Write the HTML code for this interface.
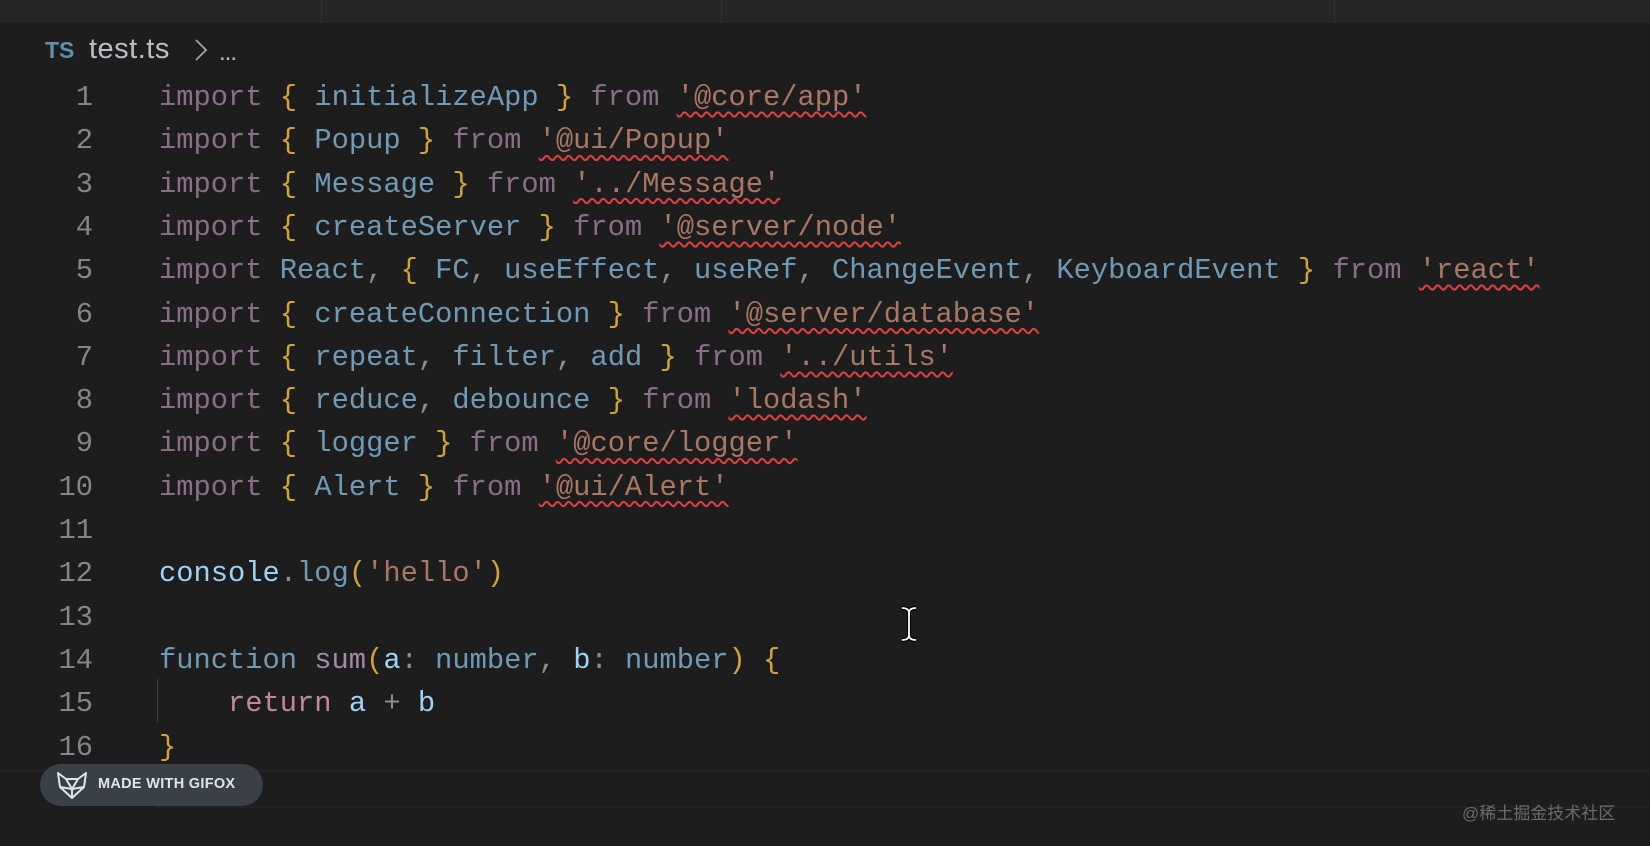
<!DOCTYPE html>
<html><head><meta charset="utf-8"><style>
html,body{margin:0;padding:0;width:1650px;height:846px;overflow:hidden;background:#1d1d1e;}
.top{position:absolute;left:0;top:0;width:1650px;height:23px;background:#262627;}
.sep{position:absolute;top:0;width:1px;height:23px;background:#323233;}
.bc{position:absolute;top:33px;font:29px "Liberation Sans",sans-serif;color:#b9bfc4;white-space:nowrap}
.ts{position:absolute;left:45px;top:37px;color:#5f8fad;font:bold 23px "Liberation Sans",sans-serif;}
.code{position:absolute;left:0;top:76px;font:28.75px/43.3px "Liberation Mono",monospace;white-space:pre;}
.ln{position:absolute;left:0;width:93px;text-align:right;color:#858585;}
.tx{position:absolute;left:159px;}
.k{color:#8a6d86}.i{color:#6f9ab5}.b{color:#d1a33a}.s{color:#a87862}.p{color:#8d8d8d}
.sq{text-decoration:underline wavy #e0403f;text-decoration-thickness:1.5px;text-underline-offset:6px}
.v{color:#9cd4f5}.r{color:#c0879e}.f{color:#a38aa8}.c{color:#9cd4f5}
.guide{position:absolute;left:157px;top:679px;width:1px;height:43px;background:#404040}
.hl{position:absolute;height:2px;background:#232324}
.badge{position:absolute;left:40px;top:764px;width:223px;height:42px;border-radius:21px;background:#3b4046;}
.badge span{position:absolute;left:58px;top:12px;font:bold 14.5px "Liberation Sans",sans-serif;color:#dde6ee;letter-spacing:.3px}
.wm{position:absolute;left:1462px;top:799px;font:17px "Liberation Sans","Noto Sans CJK SC",sans-serif;color:#6b6b6b}
</style></head><body>
<div class="top"></div>
<div class="sep" style="left:321px"></div><div class="sep" style="left:721px"></div><div class="sep" style="left:1334px"></div>
<div class="ts">TS</div>
<div class="bc" style="left:89px;letter-spacing:0.5px">test.ts</div>
<svg style="position:absolute;left:194px;top:38px" width="14" height="24" viewBox="0 0 14 24"><path d="M2 2 L12 12 L2 22" fill="none" stroke="#a0a6ab" stroke-width="1.8"/></svg>
<div class="bc" style="left:219px;font-size:24px;top:39px;letter-spacing:-1px">...</div>
<div class="code">
<div class="ln" style="top:0">1</div><div class="tx" style="top:0"><span class="k">import</span> <span class="b">{</span> <span class="i">initializeApp</span> <span class="b">}</span> <span class="k">from</span> <span class="s sq">'@core/app'</span></div>
<div class="ln" style="top:43.3px">2</div><div class="tx" style="top:43.3px"><span class="k">import</span> <span class="b">{</span> <span class="i">Popup</span> <span class="b">}</span> <span class="k">from</span> <span class="s sq">'@ui/Popup'</span></div>
<div class="ln" style="top:86.6px">3</div><div class="tx" style="top:86.6px"><span class="k">import</span> <span class="b">{</span> <span class="i">Message</span> <span class="b">}</span> <span class="k">from</span> <span class="s sq">'../Message'</span></div>
<div class="ln" style="top:129.9px">4</div><div class="tx" style="top:129.9px"><span class="k">import</span> <span class="b">{</span> <span class="i">createServer</span> <span class="b">}</span> <span class="k">from</span> <span class="s sq">'@server/node'</span></div>
<div class="ln" style="top:173.2px">5</div><div class="tx" style="top:173.2px"><span class="k">import</span> <span class="i">React</span><span class="p">,</span> <span class="b">{</span> <span class="i">FC</span><span class="p">,</span> <span class="i">useEffect</span><span class="p">,</span> <span class="i">useRef</span><span class="p">,</span> <span class="i">ChangeEvent</span><span class="p">,</span> <span class="i">KeyboardEvent</span> <span class="b">}</span> <span class="k">from</span> <span class="s sq">'react'</span></div>
<div class="ln" style="top:216.5px">6</div><div class="tx" style="top:216.5px"><span class="k">import</span> <span class="b">{</span> <span class="i">createConnection</span> <span class="b">}</span> <span class="k">from</span> <span class="s sq">'@server/database'</span></div>
<div class="ln" style="top:259.8px">7</div><div class="tx" style="top:259.8px"><span class="k">import</span> <span class="b">{</span> <span class="i">repeat</span><span class="p">,</span> <span class="i">filter</span><span class="p">,</span> <span class="i">add</span> <span class="b">}</span> <span class="k">from</span> <span class="s sq">'../utils'</span></div>
<div class="ln" style="top:303.1px">8</div><div class="tx" style="top:303.1px"><span class="k">import</span> <span class="b">{</span> <span class="i">reduce</span><span class="p">,</span> <span class="i">debounce</span> <span class="b">}</span> <span class="k">from</span> <span class="s sq">'lodash'</span></div>
<div class="ln" style="top:346.4px">9</div><div class="tx" style="top:346.4px"><span class="k">import</span> <span class="b">{</span> <span class="i">logger</span> <span class="b">}</span> <span class="k">from</span> <span class="s sq">'@core/logger'</span></div>
<div class="ln" style="top:389.7px">10</div><div class="tx" style="top:389.7px"><span class="k">import</span> <span class="b">{</span> <span class="i">Alert</span> <span class="b">}</span> <span class="k">from</span> <span class="s sq">'@ui/Alert'</span></div>
<div class="ln" style="top:433px">11</div>
<div class="ln" style="top:476.3px">12</div><div class="tx" style="top:476.3px"><span class="c">console</span><span class="p">.</span><span class="i">log</span><span class="b">(</span><span class="s">'hello'</span><span class="b">)</span></div>
<div class="ln" style="top:519.6px">13</div>
<div class="ln" style="top:562.9px">14</div><div class="tx" style="top:562.9px"><span class="i">function</span> <span class="f">sum</span><span class="b">(</span><span class="v">a</span><span class="p">:</span> <span class="i">number</span><span class="p">,</span> <span class="v">b</span><span class="p">:</span> <span class="i">number</span><span class="b">)</span> <span class="b">{</span></div>
<div class="ln" style="top:606.2px">15</div><div class="tx" style="top:606.2px">    <span class="r">return</span> <span class="v">a</span> <span class="p">+</span> <span class="v">b</span></div>
<div class="ln" style="top:649.5px">16</div><div class="tx" style="top:649.5px"><span class="b">}</span></div>
</div>
<div class="guide"></div>
<div class="hl" style="left:0;top:770px;width:1650px"></div>
<div class="hl" style="left:155px;top:806px;width:1495px"></div>
<svg style="position:absolute;left:899px;top:606px" width="20" height="36" viewBox="0 0 20 36"><path d="M3 2 Q10 2 10 7 Q10 2 17 2 M10 7 V29 M3 34 Q10 34 10 29 Q10 34 17 34" fill="none" stroke="#000" stroke-width="4"/><path d="M3 2 Q10 2 10 7 Q10 2 17 2 M10 7 V29 M3 34 Q10 34 10 29 Q10 34 17 34" fill="none" stroke="#fff" stroke-width="1.8"/></svg>
<div class="badge"><svg style="position:absolute;left:16px;top:7px" width="32" height="28" viewBox="0 0 32 28"><path d="M2 2 L10 8 H22 L30 2 L28 16 L16 27 L4 16 Z M10 8 L16 18 L22 8 M4 16 L16 18 L28 16 M16 18 V27" fill="none" stroke="#dde6ee" stroke-width="2" stroke-linejoin="round"/></svg><span>MADE WITH GIFOX</span></div>
<div class="wm">@稀土掘金技术社区</div>
</body></html>
